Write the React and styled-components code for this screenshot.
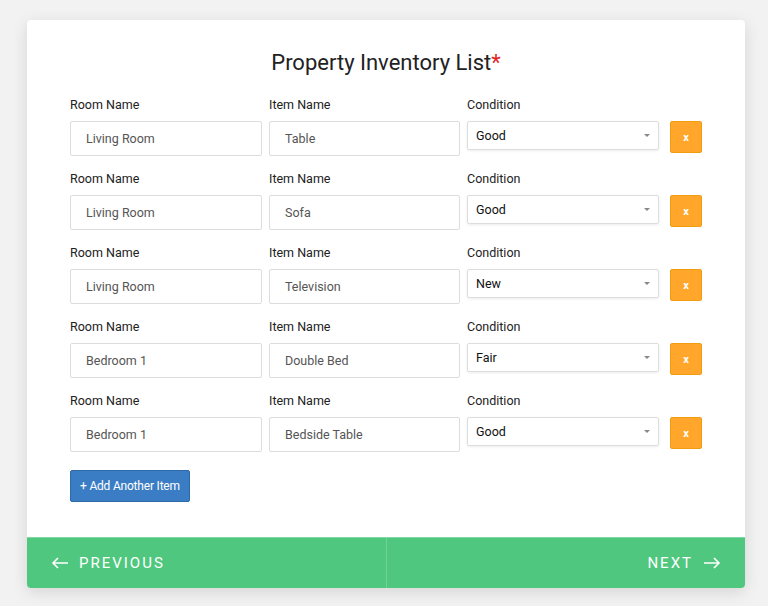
import styled, { createGlobalStyle } from "styled-components";

const Global = createGlobalStyle`
  body { margin: 0; background: #f2f2f2; font-family: Roboto, "Liberation Sans", sans-serif; }
`;

const Page = styled.div`
  padding: 20px 23px 20px 27px;
`;

const Card = styled.div`
  background: #fff;
  border-radius: 4px;
  box-shadow: 0 4px 16px rgba(0, 0, 0, 0.12);
  overflow: hidden;
  width: 718px;
`;

const Body = styled.div`
  padding: 30px 43px 35px;
`;

const Title = styled.h2`
  margin: 0 0 22px;
  text-align: center;
  font-weight: 400;
  font-size: 22px;
  color: #222;
  span { color: #e02424; }
`;

const Row = styled.div`
  display: grid;
  grid-template-columns: 192px 191px 192px 44px;
  column-gap: 7px;
  margin-bottom: 15px;
`;

const Label = styled.div`
  font-size: 12.5px;
  color: #222;
  height: 18px;
  margin-bottom: 6px;
`;

const Input = styled.div`
  height: 35px;
  box-sizing: border-box;
  border: 1px solid #ddd;
  border-radius: 2px;
  padding: 0 15px;
  display: flex;
  align-items: center;
  font-size: 12.5px;
  color: #555;
`;

const Select = styled.div`
  height: 29px;
  margin-top: 1px;
  box-sizing: border-box;
  border: 1px solid #ddd;
  border-radius: 2px;
  box-shadow: 0 1px 3px rgba(0,0,0,0.08);
  padding: 0 8px;
  display: flex;
  align-items: center;
  justify-content: space-between;
  font-size: 12.5px;
  color: #111;
  &::after { content: ""; border: 3px solid transparent; border-top: 3px solid #888; margin-top: 3px; }
`;

const Remove = styled.div`
  width: 32px;
  height: 32px;
  margin-left: 4px;
  background: #ffa62b;
  border: 1px solid #f39c12;
  box-sizing: border-box;
  border-radius: 2px;
  color: #fff;
  font-size: 11px;
  font-weight: 700;
  display: flex;
  align-items: center;
  justify-content: center;
`;

const AddButton = styled.button`
  margin-top: 3px;
  background: #3b7dc4;
  border: 1px solid #2e6aa8;
  border-radius: 2px;
  color: #fff;
  font-family: inherit;
  font-size: 12px;
  letter-spacing: -0.2px;
  height: 32px;
  padding: 0 9px;
`;

const Footer = styled.div`
  display: grid;
  grid-template-columns: 1fr 1fr;
  background: #4fc77e;
  height: 50px;
  border-top: 1px solid #7fd9a2;
`;

const Nav = styled.div`
  display: flex;
  align-items: center;
  justify-content: ${(p) => (p.right ? "flex-end" : "flex-start")};
  gap: 10px;
  padding: 0 24px;
  color: #fff;
  font-size: 15px;
  letter-spacing: 2px;
  border-left: ${(p) => (p.right ? "1px solid #6fd398" : "none")};
`;

const Arrow = ({ dir }) => (
  <svg width="18" height="14" viewBox="0 0 18 14" fill="none" stroke="#fff" strokeWidth="1.6">
    {dir === "left" ? <path d="M17 7H2M7 2L2 7l5 5" /> : <path d="M1 7h15M11 2l5 5-5 5" />}
  </svg>
);

const items = [
  ["Living Room", "Table", "Good"],
  ["Living Room", "Sofa", "Good"],
  ["Living Room", "Television", "New"],
  ["Bedroom 1", "Double Bed", "Fair"],
  ["Bedroom 1", "Bedside Table", "Good"],
];

export default function App() {
  return (
    <Page>
      <Global />
      <Card>
        <Body>
          <Title>Property Inventory List<span>*</span></Title>
          {items.map(([room, item, cond], i) => (
            <Row key={i}>
              <div><Label>Room Name</Label><Input>{room}</Input></div>
              <div><Label>Item Name</Label><Input>{item}</Input></div>
              <div><Label>Condition</Label><Select>{cond}</Select></div>
              <div><Label /><Remove>x</Remove></div>
            </Row>
          ))}
          <AddButton>+ Add Another Item</AddButton>
        </Body>
        <Footer>
          <Nav><Arrow dir="left" />PREVIOUS</Nav>
          <Nav right>NEXT<Arrow dir="right" /></Nav>
        </Footer>
      </Card>
    </Page>
  );
}
